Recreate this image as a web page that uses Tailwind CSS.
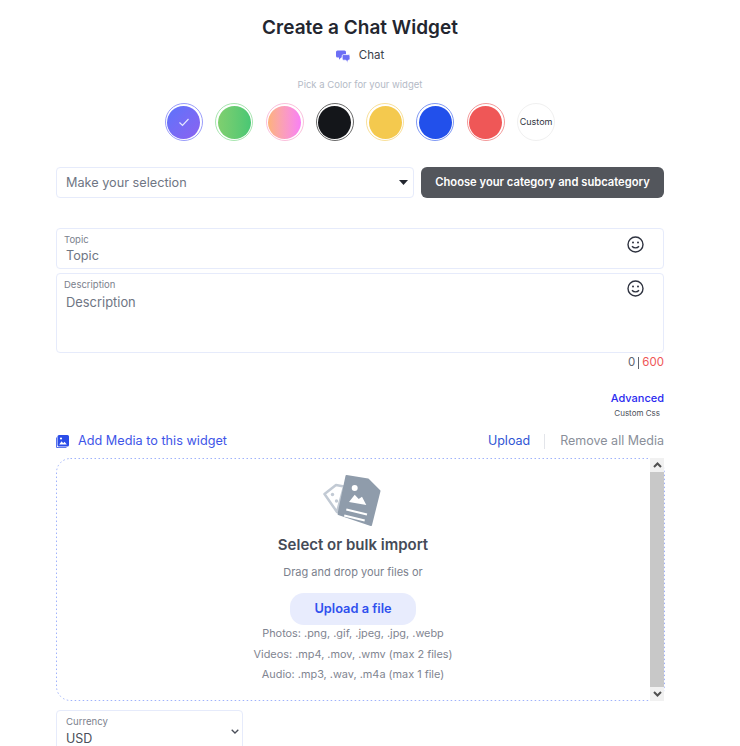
<!DOCTYPE html>
<html lang="en">
<head>
  <meta charset="UTF-8" />
  <title>Create a Chat Widget</title>
  <script src="https://cdn.jsdelivr.net/npm/@tailwindcss/browser@4"></script>
</head>
<body class="bg-white font-['Inter',sans-serif] h-[746px] overflow-hidden">
<main class="w-[608px] ml-[56px] flex flex-col">
  <h1 class="mt-[16px] h-[24px] leading-[24px] text-center text-[19px] font-semibold text-[#23262f]">Create a Chat Widget</h1>
  <div class="mt-[6px] h-[20px] flex items-center justify-center gap-[9px] text-[11.5px] text-[#3b3f4a]">
    <svg class="w-[14px] h-[13px]" viewBox="0 0 14 13"><path fill="#6c6ff5" d="M1.500.5h7A1.500 1.500 0 0 1 10 2v4a1.500 1.500 0 0 1-1.500 1.500H5.200L3 9.800V7.500H1.500A1.500 1.500 0 0 1 0 6V2A1.500 1.500 0 0 1 1.500.5z"/><path fill="#6c6ff5" stroke="#fff" stroke-width=".8" d="M7.500 4.600h5.200a1.300 1.300 0 0 1 1.300 1.300v3a1.300 1.300 0 0 1-1.300 1.300h-.7v2.300L9.800 10.200H7.500a1.300 1.300 0 0 1-1.300-1.300v-3a1.300 1.300 0 0 1 1.300-1.300z"/></svg>
    <span>Chat</span>
  </div>
  <p class="mt-[12px] h-[14px] leading-[14px] text-center text-[9.5px] text-[#b4bac6]">Pick a Color for your widget</p>
  <div class="mt-[11px] flex justify-center gap-[12.3px]">
    <div class="w-[38px] h-[38px] rounded-full border-[1.5px] border-[#9a9dfb] p-[1.5px]"><div class="w-full h-full rounded-full bg-gradient-to-br from-[#5b73fb] to-[#8a62f0] flex items-center justify-center">
      <svg class="w-[12px] h-[12px]" viewBox="0 0 12 12" fill="none" stroke="#e4e6ff" stroke-width="1.200"><path d="M1.500 6.500 4.500 9.500 10.500 3"/></svg>
    </div></div>
    <div class="w-[38px] h-[38px] rounded-full border-[1.5px] border-[#a8e6b0] p-[1.5px]"><div class="w-full h-full rounded-full bg-gradient-to-r from-[#7fcf6f] to-[#48c774]"></div></div>
    <div class="w-[38px] h-[38px] rounded-full border-[1.5px] border-[#fbc0dc] p-[1.5px]"><div class="w-full h-full rounded-full bg-gradient-to-r from-[#fdb27a] to-[#f97ff5]"></div></div>
    <div class="w-[38px] h-[38px] rounded-full border-[1.5px] border-[#6a6a6a] p-[1.5px]"><div class="w-full h-full rounded-full bg-[#14161a]"></div></div>
    <div class="w-[38px] h-[38px] rounded-full border-[1.5px] border-[#f9e09a] p-[1.5px]"><div class="w-full h-full rounded-full bg-[#f4c94e]"></div></div>
    <div class="w-[38px] h-[38px] rounded-full border-[1.5px] border-[#7f99f5] p-[1.5px]"><div class="w-full h-full rounded-full bg-[#2250eb]"></div></div>
    <div class="w-[38px] h-[38px] rounded-full border-[1.5px] border-[#f49a9a] p-[1.5px]"><div class="w-full h-full rounded-full bg-[#ef5757]"></div></div>
    <div class="w-[38px] h-[38px] rounded-full border border-[#f0f0f0] flex items-center justify-center text-[9px] text-[#33363f]">Custom</div>
  </div>

  <div class="mt-[26px] flex gap-[7px]">
    <div class="w-[358px] h-[31px] rounded-[4px] border border-[#e6ebfb] pl-[9px] pr-[5px] flex items-center justify-between text-[12.7px] text-[#6f7684]">
      <span>Make your selection</span>
      <svg class="w-[9px] h-[5px]" viewBox="0 0 9 5"><path fill="#23262f" d="M0 0h9L4.500 5z"/></svg>
    </div>
    <button class="w-[243px] h-[31px] rounded-[6px] bg-[#53565c] text-white text-[11.2px] font-semibold">Choose your category and subcategory</button>
  </div>

  <div class="mt-[30px] relative h-[41px] rounded-[4px] border border-[#e6ebfb]">
    <p class="absolute left-[7px] top-[5px] text-[9.5px] leading-[11px] text-[#7b818d]">Topic</p>
    <p class="absolute left-[9px] top-[19px] text-[12.7px] leading-[16px] text-[#6f7684]">Topic</p>
    <svg class="absolute right-[19px] top-[7px] w-[17px] h-[17px]" viewBox="0 0 17 17" fill="none" stroke="#2f3340" stroke-width="1.400"><circle cx="8.500" cy="8.500" r="7.500"/><path d="M5 10.200c1.800 2.200 5.200 2.200 7 0"/><circle cx="6" cy="6.500" r="1" fill="#2f3340" stroke="none"/><circle cx="11" cy="6.500" r="1" fill="#2f3340" stroke="none"/></svg>
  </div>
  <div class="mt-[4px] relative h-[80px] rounded-[4px] border border-[#e6ebfb]">
    <p class="absolute left-[7px] top-[5px] text-[9.5px] leading-[11px] text-[#7b818d]">Description</p>
    <p class="absolute left-[9px] top-[21px] text-[12.9px] leading-[16px] text-[#6f7684]">Description</p>
    <svg class="absolute right-[19px] top-[6px] w-[17px] h-[17px]" viewBox="0 0 17 17" fill="none" stroke="#2f3340" stroke-width="1.400"><circle cx="8.500" cy="8.500" r="7.500"/><path d="M5 10.200c1.800 2.200 5.200 2.200 7 0"/><circle cx="6" cy="6.500" r="1" fill="#2f3340" stroke="none"/><circle cx="11" cy="6.500" r="1" fill="#2f3340" stroke="none"/></svg>
  </div>
  <div class="mt-[3px] h-[14px] flex justify-end items-center gap-[3px] text-[11.5px] text-[#5f6470]">
    <span>0</span><span class="w-px h-[12px] bg-[#5f6470]"></span><span class="text-[#ef5757]">600</span>
  </div>

  <p class="mt-[21px] h-[14px] leading-[14px] text-right text-[11px] font-medium text-[#2a2af0]">Advanced</p>
  <p class="mt-[2px] h-[12px] leading-[12px] text-right pr-[4px] text-[8px] text-[#4a4e59]">Custom Css</p>

  <div class="mt-[12px] h-[20px] flex items-center text-[12.5px]">
    <svg class="w-[13px] h-[13px]" viewBox="0 0 13 13"><path fill="#2b4de8" d="M3 0h8.500A1.500 1.500 0 0 1 13 1.500V10a1.500 1.500 0 0 1-1.500 1.500H3A1.500 1.500 0 0 1 1.500 10V1.500A1.500 1.500 0 0 1 3 0z"/><path fill="#2b4de8" d="M0 2.500h.8v9a.8.8 0 0 0 .8.800h8.900v.7H1.500A1.500 1.500 0 0 1 0 11.500z"/><path fill="#fff" d="M3.200 9.500 5.600 6.300 7.200 8.200 8.500 6.800 10.800 9.500z"/><circle cx="5" cy="3.500" r="1.100" fill="#fff"/></svg>
    <span class="ml-[9px] text-[12.7px] text-[#3e55e8]">Add Media to this widget</span>
    <span class="ml-auto text-[#2f55d4]">Upload</span>
    <span class="ml-[14px] mr-[15px] w-px h-[15px] bg-[#e3e5ea]"></span>
    <span class="text-[#8a8f9a]">Remove all Media</span>
  </div>

  <div class="mt-[7px] relative h-[243px] pr-[14px] flex flex-col items-center">
    <svg class="absolute inset-0 w-[608px] h-[243px] overflow-visible" viewBox="0 0 608 243" fill="none"><rect x=".5" y=".5" width="608" height="242" rx="14" stroke="#9fb2fb" stroke-dasharray="1.500 2.500"/></svg>
    <svg class="mt-[16px] ml-[-2px] w-[58px] h-[52px]" viewBox="0 0 58 52">
      <path fill="none" stroke="#c2cad4" stroke-width="2.500" stroke-linejoin="round" d="M1.500 20 13 11l8 1.500L14 38z"/>
      <circle cx="9.500" cy="20.500" r="1.700" fill="#c2cad4"/><circle cx="13.500" cy="27" r="1.700" fill="#c2cad4"/>
      <path fill="#8f9cab" stroke="#8f9cab" stroke-width="2" stroke-linejoin="round" d="M23.500 2 45 5.500 56.500 17 48 51 15.500 40z"/>
      <circle cx="31.700" cy="14" r="3" fill="#fff"/>
      <path fill="#fff" d="M26 28 31.700 20.700 35.700 25 39 22.700 43.300 31z"/>
      <path fill="none" stroke="#fff" stroke-width="2.200" d="M23.300 35.500 44 40.500M21.200 41.500 41.700 46.500"/>
    </svg>
    <p class="mt-[9px] h-[20px] leading-[20px] text-[15px] font-semibold text-[#454b57]">Select or bulk import</p>
    <p class="mt-[9px] h-[16px] leading-[16px] text-[11px] text-[#7b818d]">Drag and drop your files or</p>
    <button class="mt-[13px] w-[126px] h-[32px] rounded-[14px] bg-[#e8ecfd] text-[12.8px] font-semibold text-[#2f50ee]">Upload a file</button>
    <div class="mt-[-2px] text-center text-[10.9px] leading-[20.5px] text-[#7f8591]">
      <p>Photos: .png, .gif, .jpeg, .jpg, .webp</p>
      <p>Videos: .mp4, .mov, .wmv (max 2 files)</p>
      <p>Audio: .mp3, .wav, .m4a (max 1 file)</p>
    </div>
    <div class="absolute right-0 top-0 bottom-0 w-[14px] flex flex-col bg-[#f1f1f1]">
      <div class="h-[14px] flex items-center justify-center"><svg class="w-[9px] h-[6px]" viewBox="0 0 9 6" fill="none" stroke="#505050" stroke-width="2"><path d="M1 5 4.500 1.500 8 5"/></svg></div>
      <div class="flex-1 bg-[#c8c8c8]"></div>
      <div class="h-[14px] flex items-center justify-center"><svg class="w-[9px] h-[6px]" viewBox="0 0 9 6" fill="none" stroke="#505050" stroke-width="2"><path d="M1 1 4.500 4.500 8 1"/></svg></div>
    </div>
  </div>

  <div class="mt-[9px] w-[187px] h-[50px] relative rounded-[4px] border border-[#e6ebfb]">
    <p class="absolute left-[9px] top-[5px] text-[9.6px] leading-[11px] text-[#7b818d]">Currency</p>
    <p class="absolute left-[9px] top-[20px] text-[12.5px] leading-[16px] text-[#4a4e59]">USD</p>
    <svg class="absolute right-[3px] top-[18px] w-[8px] h-[5px]" viewBox="0 0 8 5" fill="none" stroke="#4a4e59" stroke-width="1.300"><path d="M.7.700 4 4 7.300.7"/></svg>
  </div>
</main>
</body>
</html>
